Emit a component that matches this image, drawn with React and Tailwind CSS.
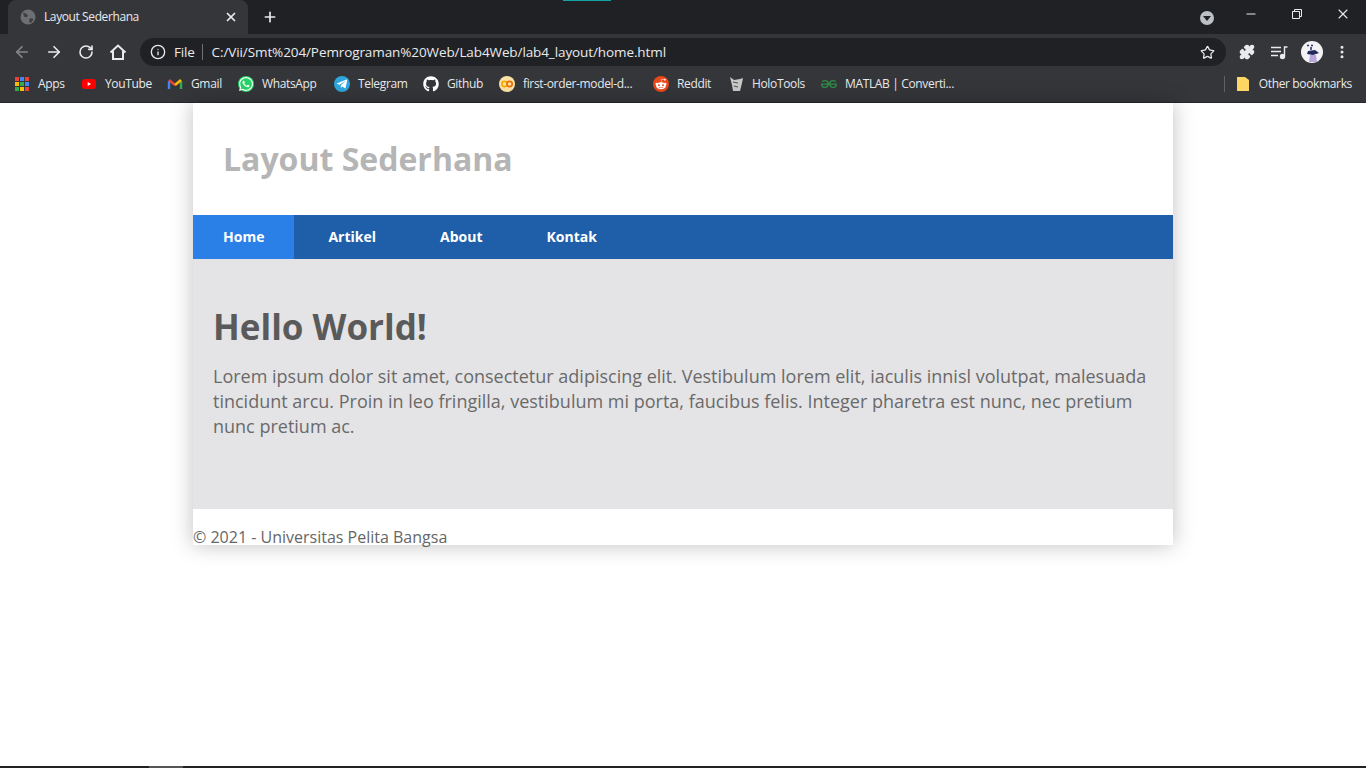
import { ArrowLeft, ArrowRight, RotateCw, Info, Star, Puzzle, MoreVertical, Plus, X, Minus } from 'lucide-react';
import { FaGithub, FaWhatsapp, FaTelegramPlane, FaRedditAlien } from 'react-icons/fa';
import { SiGeeksforgeeks } from 'react-icons/si';

const AppsIcon = () => {
  const colors = ['#ea4335', '#4285f4', '#ea4335', '#fbbc05', '#34a853', '#4285f4', '#34a853', '#fbbc05', '#ea4335'];
  return (
    <div className="grid h-[14px] w-[14px] grid-cols-3 gap-[1px]">
      {colors.map((color, i) => (
        <span key={i} style={{ background: color }} />
      ))}
    </div>
  );
};

const YoutubeIcon = () => (
  <svg width="16" height="16" viewBox="0 0 16 16">
    <rect x="1" y="3" width="14" height="10" rx="3" fill="#f00" />
    <path d="M6.7 6v4l3.4-2z" fill="#fff" />
  </svg>
);

const GmailIcon = () => (
  <svg width="16" height="16" viewBox="0 0 16 16" fill="none">
    <path d="M2 13V5" stroke="#4285f4" strokeWidth="2.4" />
    <path d="M14 13V5" stroke="#34a853" strokeWidth="2.4" />
    <path d="M2 4l6 5" stroke="#ea4335" strokeWidth="2.4" />
    <path d="M14 4l-6 5" stroke="#fbbc05" strokeWidth="2.4" />
  </svg>
);

const WhatsappIcon = () => (
  <div className="flex h-4 w-4 items-center justify-center rounded-full bg-[#25d366]">
    <FaWhatsapp className="h-4 w-4 text-[#f4fff8]" />
  </div>
);

const TelegramIcon = () => (
  <div className="flex h-4 w-4 items-center justify-center rounded-full bg-[#2ea6dc]">
    <FaTelegramPlane className="h-3 w-3 text-white" />
  </div>
);

const ColabIcon = () => (
  <svg width="16" height="16" viewBox="0 0 16 16" fill="none">
    <circle cx="8" cy="8" r="8" fill="#fbe3a8" />
    <circle cx="5.4" cy="8" r="2.6" stroke="#f9ab00" strokeWidth="1.7" />
    <circle cx="10.6" cy="8" r="2.6" stroke="#e8710a" strokeWidth="1.7" />
  </svg>
);

const RedditIcon = () => (
  <div className="flex h-4 w-4 items-center justify-center rounded-full bg-[#e8481a]">
    <FaRedditAlien className="h-3 w-3 text-white" />
  </div>
);

const HoloIcon = () => (
  <svg width="16" height="16" viewBox="0 0 16 16">
    <path d="M2 1l4 3 6-1 3-1-1 5-2 8H5L4 9z" fill="#c9c9c9" />
    <path d="M5 6l5 1M6 10l4 1" stroke="#55565a" strokeWidth="1.2" />
  </svg>
);

const bookmarks = [
  { label: 'Apps', icon: <AppsIcon />, width: 'w-[67px]' },
  { label: 'YouTube', icon: <YoutubeIcon />, width: 'w-[86px]' },
  { label: 'Gmail', icon: <GmailIcon />, width: 'w-[71px]' },
  { label: 'WhatsApp', icon: <WhatsappIcon />, width: 'w-[96px]' },
  { label: 'Telegram', icon: <TelegramIcon />, width: 'w-[89px]' },
  { label: 'Github', icon: <FaGithub className="h-4 w-4 text-white" />, width: 'w-[76px]' },
  { label: 'first-order-model-d...', icon: <ColabIcon />, width: 'w-[154px]' },
  { label: 'Reddit', icon: <RedditIcon />, width: 'w-[75px]' },
  { label: 'HoloTools', icon: <HoloIcon />, width: 'w-[93px]' },
  { label: 'MATLAB | Converti...', icon: <SiGeeksforgeeks className="h-4 w-4 text-[#2f8d46]" />, width: 'w-[140px]' },
];

const Bookmark = ({ label, icon, width }) => (
  <div className={`flex shrink-0 items-center gap-[8px] ${width}`}>
    <span className="flex h-4 w-4 shrink-0 items-center justify-center">{icon}</span>
    <span className="whitespace-nowrap text-[12px] tracking-[-0.35px] text-[#e8eaed]">{label}</span>
  </div>
);

const RestoreIcon = () => (
  <svg width="12" height="12" viewBox="0 0 12 12" fill="none" stroke="#e8eaed">
    <path d="M1.5 3.5h7v7h-7zM3.5 3.5v-2h7v7h-2" />
  </svg>
);

const QueueIcon = () => (
  <svg width="18" height="18" viewBox="0 0 18 18" fill="none" stroke="#e8eaed" strokeWidth="1.4">
    <path d="M1 4.5h10M1 8.5h10M1 12.5h7" />
    <path d="M14.5 13V4h3" />
    <circle cx="12.5" cy="13.5" r="2" fill="#e8eaed" />
  </svg>
);

const HomeIcon = () => (
  <svg width="18" height="18" viewBox="0 0 18 18" fill="none" stroke="#e8eaed" strokeWidth="2" strokeLinejoin="miter">
    <path d="M1.5 9.5L9 2.5l7.5 7M4 8v8h10V8" />
  </svg>
);

const GlobeIcon = () => (
  <svg width="16" height="16" viewBox="0 0 16 16">
    <circle cx="8" cy="8" r="7.5" fill="#6d6f73" />
    <path d="M3 3.5l3 1 2 2-1.5 2L4 7.5zM9 10l3-1 1.5 1.5L11 14l-1.5-.5z" fill="#3f4044" />
  </svg>
);

const Avatar = () => (
  <svg width="22" height="22" viewBox="0 0 22 22">
    <circle cx="11" cy="11" r="11" fill="#f3f3f6" />
    <path d="M7 10l7-1 4 3-6 2-6-1z" fill="#23285e" />
    <path d="M9 14h6l1 7H8z" fill="#b9a6dc" />
    <path d="M10 9V6" stroke="#23285e" strokeWidth="1.5" />
    <circle cx="7" cy="4.5" r="1" fill="#23285e" />
    <circle cx="11" cy="4.5" r="1" fill="#23285e" />
  </svg>
);

const Chrome = () => (
  <div className="shrink-0">
    <div className="relative flex h-[34px] items-end bg-[#202124]">
      <span className="absolute left-[563px] top-0 h-[1px] w-[48px] bg-[#12a3a3]" />
      <div className="ml-[8px] flex h-[34px] w-[240px] items-center rounded-t-[8px] bg-[#35363a] pl-[12px] pr-[10px]">
        <GlobeIcon />
        <span className="ml-[8px] flex-1 whitespace-nowrap text-[12px] tracking-[-0.4px] text-[#e8eaed]">Layout Sederhana</span>
        <X className="h-[14px] w-[14px] text-[#e8eaed]" strokeWidth={3} />
      </div>
      <Plus className="mb-[9px] ml-[14px] h-[16px] w-[16px] text-[#e8eaed]" strokeWidth={2.5} />
      <div className="ml-auto flex h-[34px] items-center">
        <span className="mr-[14px] mt-[1px] flex h-[14px] w-[14px] items-center justify-center rounded-full bg-[#bdc1c6]">
          <span className="mt-[2px] border-x-[4px] border-t-[5px] border-x-transparent border-t-[#202124]" />
        </span>
        <div className="flex w-[46px] justify-center pb-[6px]">
          <Minus className="h-[14px] w-[14px] text-[#e8eaed]" strokeWidth={1.8} />
        </div>
        <div className="flex w-[46px] justify-center pb-[6px]">
          <RestoreIcon />
        </div>
        <div className="flex w-[46px] justify-center pb-[6px]">
          <X className="h-[16px] w-[16px] text-[#e8eaed]" strokeWidth={1.6} />
        </div>
      </div>
    </div>
    <div className="flex h-[32px] items-end bg-[#35363a]">
      <div className="flex h-[28px] w-[140px] shrink-0 items-center pl-[13px]">
        <ArrowLeft className="h-[18px] w-[18px] text-[#86888c]" strokeWidth={2.2} />
        <ArrowRight className="ml-[14px] h-[18px] w-[18px] text-[#e8eaed]" strokeWidth={2.2} />
        <RotateCw className="ml-[15px] h-[16px] w-[16px] text-[#e8eaed]" strokeWidth={2.4} />
        <span className="ml-[15px]">
          <HomeIcon />
        </span>
      </div>
      <div className="flex h-[28px] w-[1086px] items-center rounded-full bg-[#202124] pl-[10px] pr-[11px]">
        <Info className="h-[16px] w-[16px] text-[#e8eaed]" strokeWidth={2} />
        <span className="ml-[8px] text-[13.5px] tracking-[-0.2px] text-[#e8eaed]">File</span>
        <span className="ml-[7px] h-[16px] w-[1px] bg-[#6f7175]" />
        <span className="ml-[9px] flex-1 whitespace-nowrap text-[13.5px] tracking-[-0.1px] text-[#e8eaed]">
          C:/Vii/Smt%204/Pemrograman%20Web/Lab4Web/lab4_layout/home.html
        </span>
        <Star className="h-[15px] w-[15px] text-[#e8eaed]" strokeWidth={2} />
      </div>
      <div className="flex h-[28px] flex-1 items-center pl-[13px]">
        <Puzzle className="h-[16px] w-[16px] fill-[#e8eaed] text-[#e8eaed]" />
        <span className="ml-[15px]">
          <QueueIcon />
        </span>
        <span className="ml-[13px]">
          <Avatar />
        </span>
        <MoreVertical className="ml-[11px] h-[16px] w-[16px] text-[#e8eaed]" strokeWidth={2.5} />
      </div>
    </div>
    <div className="flex h-[37px] items-center border-b border-[#26272a] bg-[#35363a] pl-[14px]">
      {bookmarks.map((item) => (
        <Bookmark key={item.label} {...item} />
      ))}
      <span className="ml-auto h-[16px] w-[1px] bg-[#5f6165]" />
      <div className="ml-[11px] mr-[14px] flex items-center gap-[9px]">
        <svg width="14" height="16" viewBox="0 0 14 16">
          <path d="M1 1h8l4 3v11H1z" fill="#fdd663" />
        </svg>
        <span className="whitespace-nowrap text-[12px] tracking-[-0.35px] text-[#e8eaed]">Other bookmarks</span>
      </div>
    </div>
  </div>
);

const navItems = ['Home', 'Artikel', 'About', 'Kontak'];

export default function App() {
  return (
    <div className="flex h-screen flex-col overflow-hidden bg-white font-['Open_Sans',sans-serif]">
      <Chrome />
      <div className="flex-1">
        <div className="mx-auto w-[980px] bg-white shadow-[0_0_20px_rgba(0,0,0,0.25)]">
          <header className="flex h-[112px] items-center px-[30px]">
            <h1 className="text-[32px] font-bold text-[#b5b5b5]">Layout Sederhana</h1>
          </header>
          <nav className="flex h-[44px] gap-[4px] bg-[#1f5faa]">
            {navItems.map((item, i) => (
              <a
                key={item}
                href="#"
                className={`flex items-center px-[30px] pb-[2px] text-[14px] font-bold text-white ${i === 0 ? 'bg-[#2b80e8]' : ''}`}
              >
                {item}
              </a>
            ))}
          </nav>
          <main className="h-[250px] bg-[#e4e4e6] px-[20px] pt-[43px]">
            <h2 className="text-[35px] font-bold leading-[50px] text-[#5a5a5a]">Hello World!</h2>
            <p className="mt-[12px] text-[18px] leading-[25px] text-[#6a6a6a]">
              Lorem ipsum dolor sit amet, consectetur adipiscing elit. Vestibulum lorem elit, iaculis innisl volutpat, malesuada tincidunt arcu. Proin in leo fringilla, vestibulum mi porta, faucibus felis. Integer pharetra est nunc, nec pretium nunc pretium ac.
            </p>
          </main>
          <footer className="flex h-[36px] items-end text-[16px] leading-[16px] text-[#666666]">© 2021 - Universitas Pelita Bangsa</footer>
        </div>
      </div>
      <div className="h-[2px] shrink-0 bg-[#222222] pl-[149px]">
        <div className="h-[2px] w-[34px] bg-[#555555]" />
      </div>
    </div>
  );
}
